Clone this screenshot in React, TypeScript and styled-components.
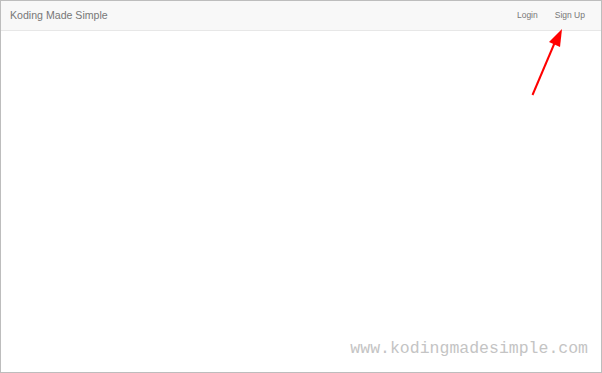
import React from "react";
import styled, { createGlobalStyle } from "styled-components";

const Global = createGlobalStyle`
  html, body { margin: 0; padding: 0; background: #fff; }
  body { font-family: "Liberation Sans", Arial, sans-serif; }
`;

const Frame = styled.div`
  position: relative;
  box-sizing: border-box;
  width: 602px;
  height: 373px;
  border: 1px solid #bdbdbd;
  background: #fff;
  overflow: hidden;
`;

const Navbar = styled.nav`
  box-sizing: border-box;
  height: 30px;
  display: flex;
  align-items: center;
  justify-content: space-between;
  padding: 0 16px 1px 9px;
  background: #f8f8f8;
  border-bottom: 1px solid #e7e7e7;
`;

const Brand = styled.a`
  font-size: 10.6px;
  line-height: 1;
  color: #777;
  text-decoration: none;
`;

const NavLinks = styled.ul`
  display: flex;
  align-items: center;
  gap: 17px;
  margin: 0;
  padding: 0;
  list-style: none;
  line-height: 1;
`;

const NavItem = styled.li`
  display: flex;
`;

const NavLink = styled.a`
  font-size: 8.5px;
  line-height: 1;
  color: #777;
  text-decoration: none;
`;

const Watermark = styled.div`
  position: absolute;
  right: 13px;
  bottom: 14px;
  font-family: "Liberation Mono", "Courier New", monospace;
  font-size: 16.5px;
  color: #c4c4c4;
`;

const Annotation = styled.svg`
  position: absolute;
  left: 0;
  top: 0;
  pointer-events: none;
`;

export default function App() {
  return (
    <>
      <Global />
      <Frame>
        <Navbar>
          <Brand href="#">Koding Made Simple</Brand>
          <NavLinks>
            <NavItem><NavLink href="#">Login</NavLink></NavItem>
            <NavItem><NavLink href="#">Sign Up</NavLink></NavItem>
          </NavLinks>
        </Navbar>
        <Watermark>www.kodingmadesimple.com</Watermark>
        <Annotation width="600" height="371" viewBox="-1 -1 600 371">
          <line x1="530.5" y1="93" x2="553" y2="40" stroke="#ff0000" strokeWidth="2" />
          <polygon points="560,27 547,40 558,45" fill="#ff0000" />
        </Annotation>
      </Frame>
    </>
  );
}
